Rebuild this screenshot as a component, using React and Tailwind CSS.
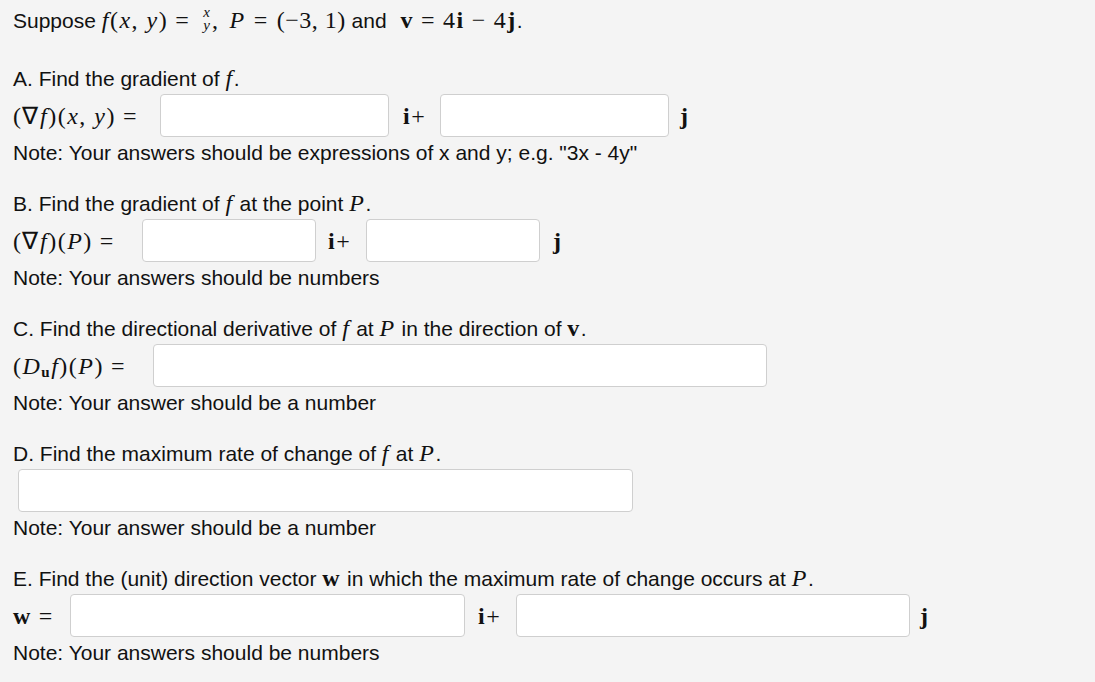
import React from "react";

const M = ({ children, className = "" }) => (
  <span className={`font-['Liberation_Serif',serif] text-[24px] tracking-[1.5px] leading-none ${className}`}>{children}</span>
);
const I = ({ children }) => <i>{children}</i>;
const B = ({ children }) => <b className="font-bold">{children}</b>;
const Eq = () => <span className="mx-[7px]">=</span>;

const Box = ({ w, className = "" }) => (
  <div
    className={`h-[43px] bg-white border border-[#cfcfcf] rounded-[4px] shrink-0 ${className}`}
    style={{ width: w }}
  />
);

const Title = ({ children }) => <div className="h-[26px] leading-[26px] whitespace-nowrap">{children}</div>;
const Note = ({ children }) => <div className="h-[26px] leading-[26px] mt-[3px] whitespace-nowrap">{children}</div>;

export default function App() {
  return (
    <div className="min-h-[682px] w-[1095px] bg-[#f4f4f4] text-[#111] font-['Liberation_Sans',Arial,sans-serif] text-[21px] pl-[13px] pt-[8px]">
      <div className="h-[26px] leading-[26px] whitespace-nowrap">
        Suppose{" "}
        <M>
          <I>f</I>(<I>x</I>, <I>y</I>)<Eq />
          <span className="inline-flex flex-col items-center align-middle text-[15px] leading-[13px] tracking-normal relative -top-[3px] ml-[6px] mr-[2px]">
            <I>x</I>
            <I>y</I>
          </span>
          ,<span className="ml-[10px]"><I>P</I></span>
          <span className="mx-[8px]">=</span>
          <span className="tracking-[0.5px]">(−3, 1)</span>
        </M>{" "}
        and{" "}
        <M className="ml-[8px]">
          <B>v</B>
          <Eq />4<B>i</B>
          <span className="mx-[7px]">−</span>4<B>j</B>
        </M>
        .
      </div>

      {/* A */}
      <div className="mt-[32px]">
        <Title>
          A. Find the gradient of <M><I>f</I></M>.
        </Title>
        <div className="flex items-center mt-[2px]">
          <M className="w-[147px]">
            (∇<I>f</I>)(<I>x</I>, <I>y</I>)<Eq />
          </M>
          <Box w={229} />
          <M className="ml-[14px] w-[37px]">
            <B>i</B>+
          </M>
          <Box w={229} />
          <M className="ml-[11px]">
            <B>j</B>
          </M>
        </div>
        <Note>Note: Your answers should be expressions of x and y; e.g. "3x - 4y"</Note>
      </div>

      {/* B */}
      <div className="mt-[25px]">
        <Title>
          B. Find the gradient of <M><I>f</I></M> at the point <M><I>P</I></M>.
        </Title>
        <div className="flex items-center mt-[2px]">
          <M className="w-[129px]">
            (∇<I>f</I>)(<I>P</I>)<Eq />
          </M>
          <Box w={174} />
          <M className="ml-[12px] w-[38px]">
            <B>i</B>+
          </M>
          <Box w={174} />
          <M className="ml-[13px]">
            <B>j</B>
          </M>
        </div>
        <Note>Note: Your answers should be numbers</Note>
      </div>

      {/* C */}
      <div className="mt-[25px]">
        <Title>
          C. Find the directional derivative of <M><I>f</I></M> at <M><I>P</I></M> in the direction of <M><B>v</B></M>.
        </Title>
        <div className="flex items-center mt-[2px]">
          <M className="w-[140px]">
            (<I>D</I>
            <sub className="text-[15px] font-bold not-italic">u</sub>
            <I>f</I>)(<I>P</I>)<Eq />
          </M>
          <Box w={614} />
        </div>
        <Note>Note: Your answer should be a number</Note>
      </div>

      {/* D */}
      <div className="mt-[25px]">
        <Title>
          D. Find the maximum rate of change of <M><I>f</I></M> at <M><I>P</I></M>.
        </Title>
        <div className="flex items-center mt-[2px]">
          <Box w={615} className="ml-[5px]" />
        </div>
        <Note>Note: Your answer should be a number</Note>
      </div>

      {/* E */}
      <div className="mt-[25px]">
        <Title>
          E. Find the (unit) direction vector <M><B>w</B></M> in which the maximum rate of change occurs at <M><I>P</I></M>.
        </Title>
        <div className="flex items-center mt-[2px]">
          <M className="w-[57px]">
            <B>w</B>
            <Eq />
          </M>
          <Box w={395} />
          <M className="ml-[13px] w-[38px]">
            <B>i</B>+
          </M>
          <Box w={394} />
          <M className="ml-[10px]">
            <B>j</B>
          </M>
        </div>
        <Note>Note: Your answers should be numbers</Note>
      </div>
    </div>
  );
}
